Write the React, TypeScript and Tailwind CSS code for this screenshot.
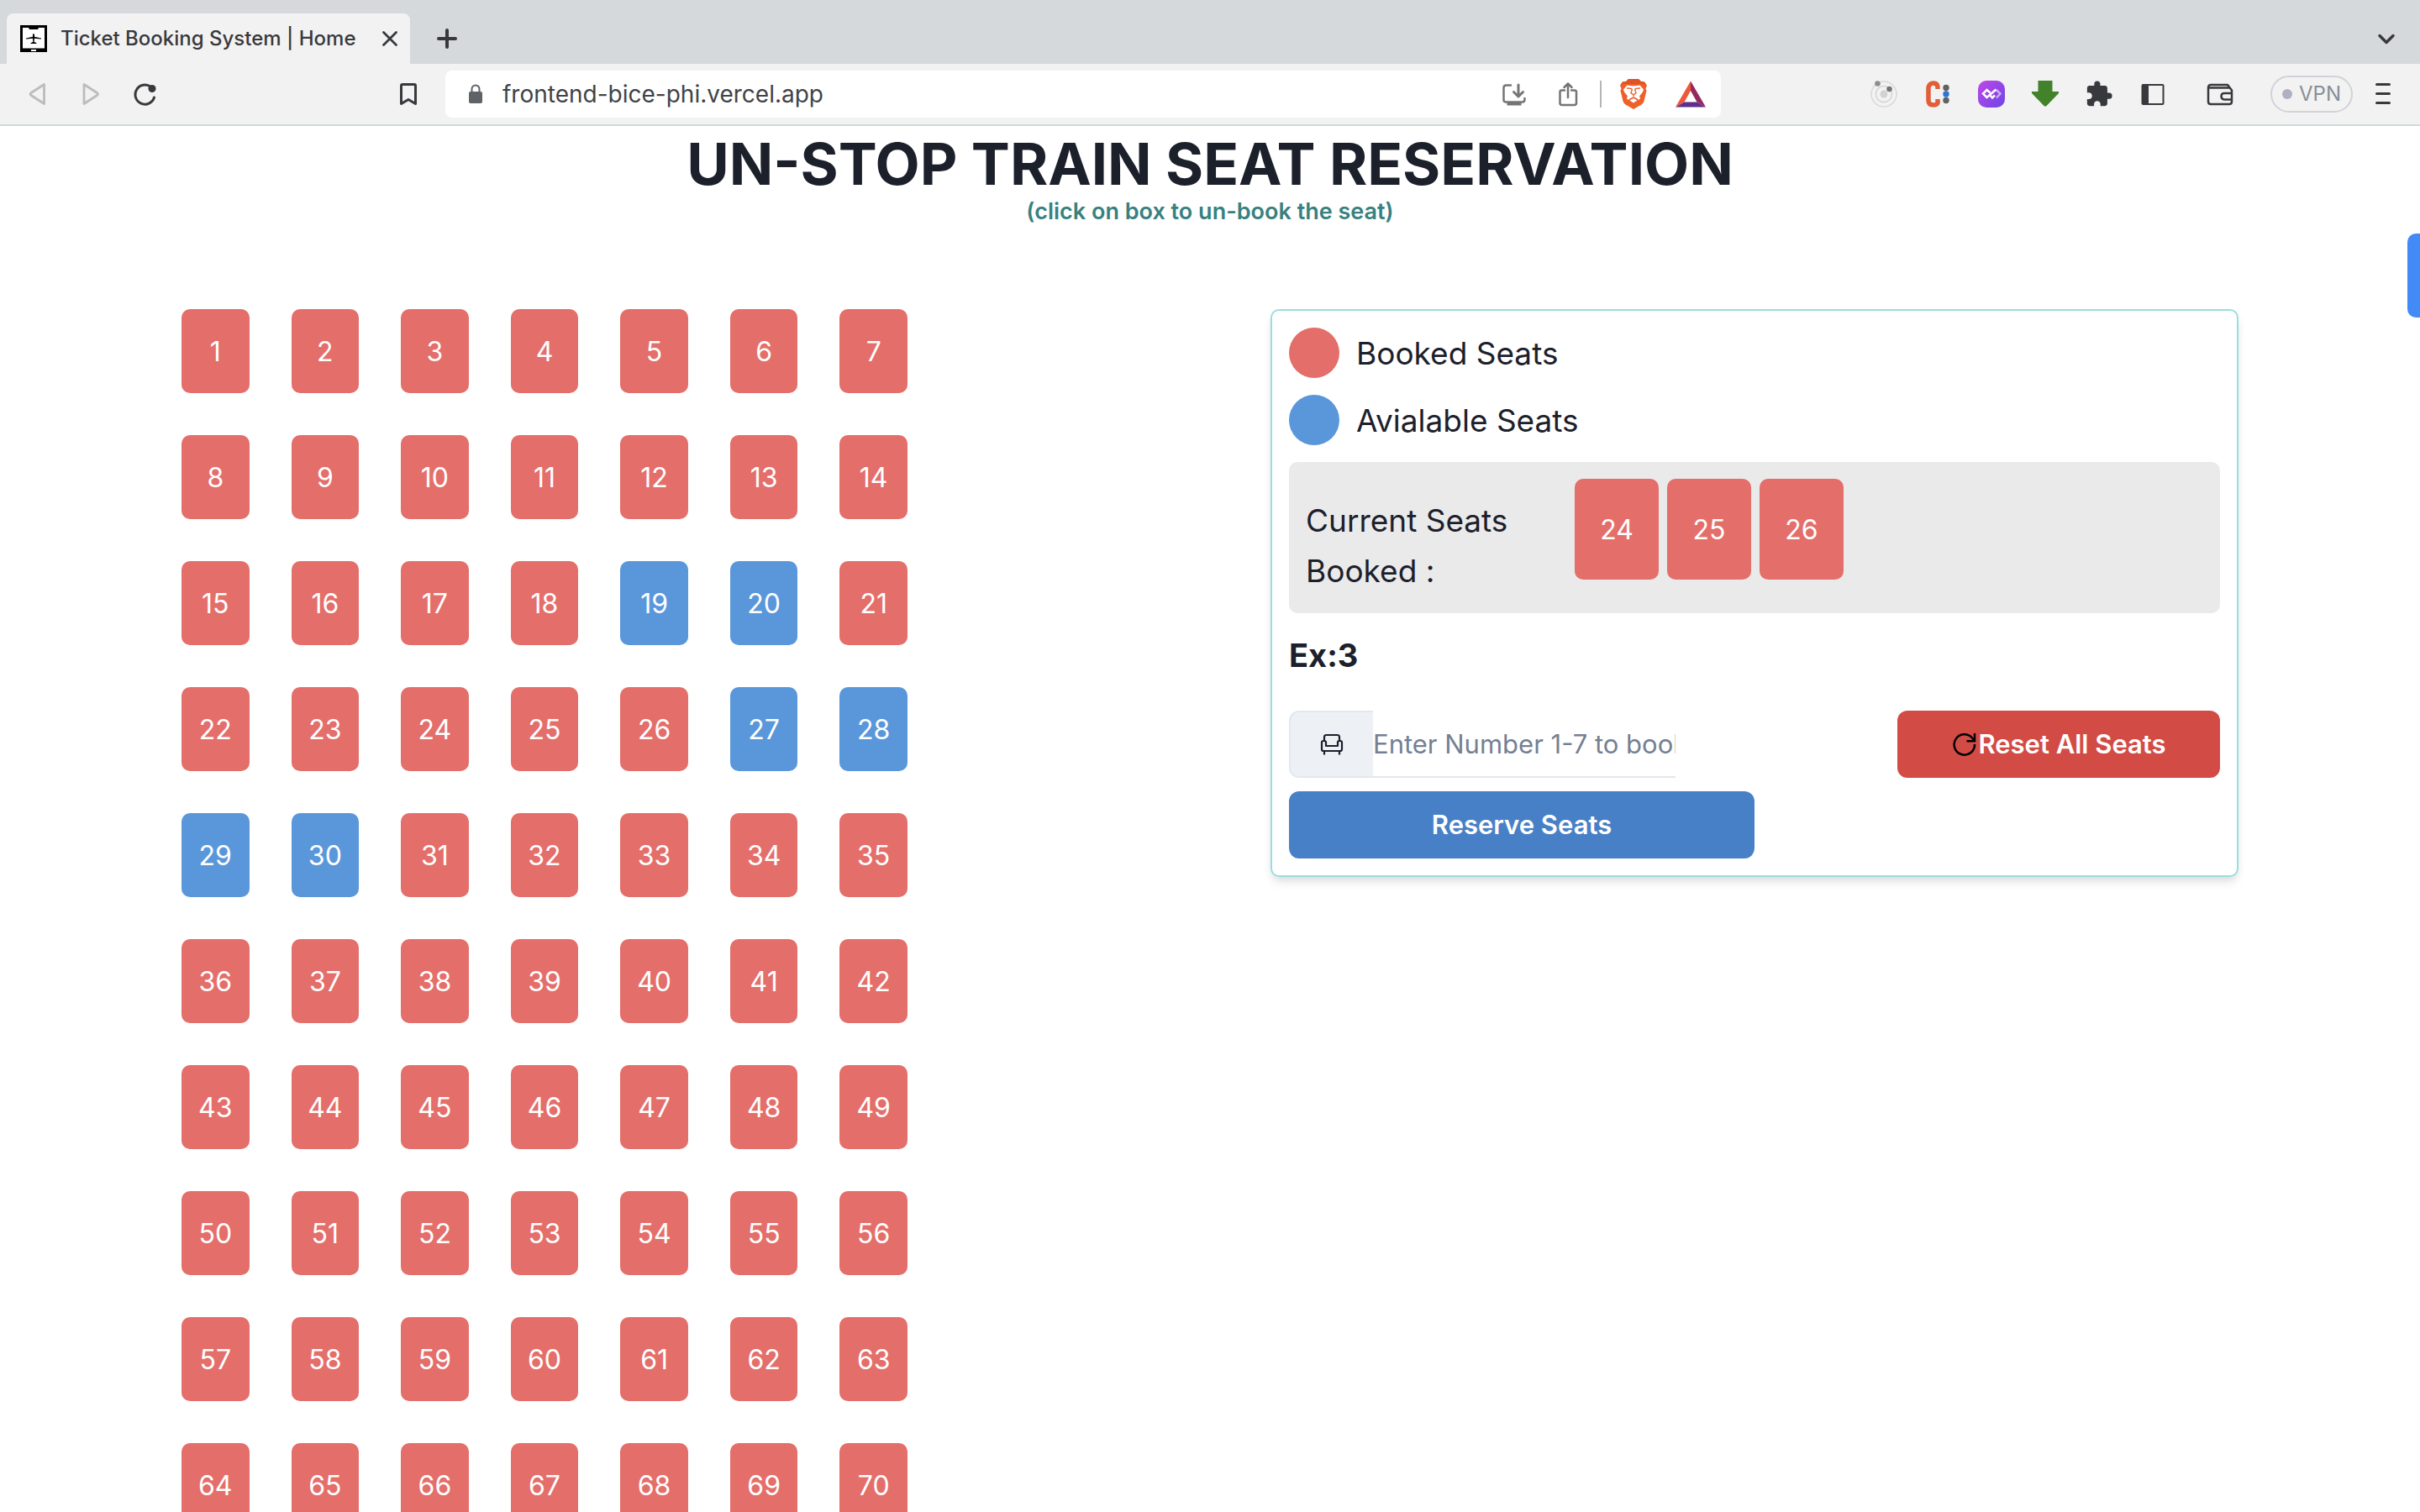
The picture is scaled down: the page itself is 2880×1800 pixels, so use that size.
import React from "react";
import { MdExtension } from "react-icons/md";

const AVAILABLE = new Set([19, 20, 27, 28, 29, 30]);
const SEATS = Array.from({ length: 70 }, (_, i) => i + 1);
const CURRENT = [24, 25, 26];

function ToolButton({ label, children }: { label: string; children: React.ReactNode }) {
  return (
    <button type="button" aria-label={label} className="flex size-8 shrink-0 items-center justify-center">
      <svg viewBox="0 0 32 32" className="size-8" fill="none" strokeLinecap="round" strokeLinejoin="round">
        {children}
      </svg>
    </button>
  );
}

function SeatIcon() {
  return (
    <svg viewBox="0 0 32 32" className="size-8" fill="none" stroke="#1c202b" strokeWidth="2.200" strokeLinejoin="round">
      <path d="M7 12V7.500Q7 5 9.500 5h13Q25 5 25 7.500V12" />
      <path d="M9 18v-4.500Q9 12 7 12H6Q4 12 4 14v8q0 2 2 2h20q2 0 2-2v-8q0-2-2-2h-1q-2 0-2 1.500V18z" />
      <path d="M7 24v4.500M25 24v4.500" />
    </svg>
  );
}

function ResetIcon() {
  return (
    <svg viewBox="0 0 32 32" className="size-8 shrink-0" fill="none" stroke="#000" strokeWidth="2.500">
      <path d="M28 16A12.200 12.200 0 1 1 25 8.500L28 12" />
      <path d="M28 3v9.200h-9.500" />
    </svg>
  );
}

function TabStrip() {
  return (
    <div className="flex h-[76px] items-end justify-between bg-[#d5d9dc] pl-2 text-[#38393d]">
      <div className="flex items-end">
        <div className="flex h-[60px] w-[480px] items-center rounded-t-lg bg-[#f2f2f2] pr-2 pl-4">
          <svg viewBox="0 0 32 32" className="size-8 shrink-0" fill="none">
            <rect width="32" height="32" fill="#000" />
            <path d="M3 3h7l1 2h10l1-2h7v24.500H3z" fill="#fff" />
            <rect x="13" y="29" width="6" height="2" fill="#fff" />
            <path
              d="M16 10c.8 0 1 1 1 2v1.800l8 1.600v1l-8-.6-.4 4 2.900 1.400v.8H12.500v-.8l2.900-1.400-.4-4-8 .6v-1l8-1.600V12c0-1 .2-2 1-2z"
              fill="#000"
            />
          </svg>
          <span className="ml-4 flex-1 text-2xl font-medium whitespace-nowrap">Ticket Booking System | Home</span>
          <ToolButton label="Close tab">
            <path d="M8.500 8.500l15 15M23.500 8.500l-15 15" stroke="#38393d" strokeWidth="2.800" />
          </ToolButton>
        </div>
        <div className="flex h-[60px] items-center pl-7">
          <ToolButton label="New tab">
            <path d="M16 6v20M6 16h20" stroke="#38393d" strokeWidth="4" />
          </ToolButton>
        </div>
      </div>
      <div className="flex h-[60px] items-center pr-6">
        <ToolButton label="Search tabs">
          <path d="M8 12.500l8 8 8-8" stroke="#38393d" strokeWidth="3.500" />
        </ToolButton>
      </div>
    </div>
  );
}

function Toolbar() {
  return (
    <div className="flex h-[74px] items-center border-b-2 border-[#d5d9dc] bg-[#f2f2f2]">
      <div className="flex w-[530px] shrink-0 items-center gap-8 px-7">
        <ToolButton label="Back">
          <path d="M24.500 4.500v23L9 17.500q-2-1.500 0-3z" stroke="#bcbcbc" strokeWidth="2.800" />
        </ToolButton>
        <ToolButton label="Forward">
          <path d="M8 4.500v23L23.500 17.500q2-1.500 0-3z" stroke="#bcbcbc" strokeWidth="2.800" />
        </ToolButton>
        <ToolButton label="Reload">
          <path d="M23.500 7.500A11.500 11.500 0 1 0 27.500 20" stroke="#38393d" strokeWidth="3" />
          <circle cx="25" cy="9.500" r="4.500" fill="#38393d" />
        </ToolButton>
        <div className="ml-auto flex">
          <ToolButton label="Bookmark">
            <path d="M7.500 6q0-1.500 1.500-1.500h14q1.500 0 1.500 1.500v21.500L16 22.500 7.500 27.500z" stroke="#38393d" strokeWidth="3" />
          </ToolButton>
        </div>
      </div>

      <div className="flex h-14 min-w-0 flex-1 items-center rounded-lg bg-white pr-[18px] pl-5">
        <svg viewBox="0 0 32 32" className="size-8 shrink-0" fill="none">
          <rect x="8" y="13" width="16" height="14" rx="2" fill="#5f6368" />
          <path d="M11.500 14v-4a4.500 4.500 0 0 1 9 0v4" stroke="#5f6368" strokeWidth="2" />
        </svg>
        <input
          aria-label="Address"
          readOnly
          value="frontend-bice-phi.vercel.app"
          className="ml-4 h-10 min-w-0 flex-1 bg-transparent text-[28px] text-[#414346] outline-none"
        />
        <div className="flex items-center">
          <ToolButton label="Install app">
            <path
              d="M12 5.500H6.500Q3.500 5.500 3.500 8.500v14.500Q3.500 25.500 6.500 25.500h19Q28.500 25.500 28.500 22.500V21"
              stroke="#757575"
              strokeWidth="2.500"
            />
            <path d="M7.500 26h17v3.500H7.500z" fill="#757575" />
            <path d="M21 5v13M15.500 13.500l5.500 5.500 5.500-5.500" stroke="#757575" strokeWidth="3" />
          </ToolButton>
          <div className="ml-8 flex">
            <ToolButton label="Share">
              <path
                d="M12 11.500H8.500Q6.500 11.500 6.500 13.500v13Q6.500 29 8.500 29h15q2.500 0 2.500-2.500v-13q0-2-2.500-2H20M16 20V4M11.500 8L16 3.500 20.500 8"
                stroke="#757575"
                strokeWidth="2.500"
              />
            </ToolButton>
          </div>
          <span className="ml-[22px] h-8 w-[2px] bg-[#b5b5b5]" />
          <button type="button" aria-label="Brave Shields" className="ml-[22px] flex h-9 w-8">
            <svg viewBox="0 0 32 36" className="h-9 w-8" fill="none" strokeLinecap="round" strokeLinejoin="round">
              <path
                d="M10 0h12l3 3 4 .5 3 4-1.500 4 1 2.500-3 12.500q-.8 2.500-3 4L16 36l-9.500-5.500q-2.200-1.500-3-4L.5 14l1-2.500L0 7.500l3-4L7 3z"
                fill="#ef6029"
              />
              <path d="M10 0h12l3 3 4 .5 2 3-4-.5H5l-4 .5 2-3L7 3z" fill="#dd5525" />
              <path
                d="M8.500 7.500l5 .8h5l5-.8 4.500 5-1 3-4 5 1 2.500-1.500 2-3.500-2.500-3-1-3 1L9.500 25 8 23l1-2.500-4-5-1-3z"
                fill="#fff"
              />
              <path d="M16 23l4.500 2.500L16 28.500 11.500 25.500z" fill="#fff" />
              <path d="M8.500 11l4.500.4 1.300 1-1.300 4.600 3 1.700 3-1.700-1.300-4.600 1.300-1 4.500-.4M16 18.700v2.300" stroke="#ef6029" strokeWidth="1.400" />
            </svg>
          </button>
          <button type="button" aria-label="Brave Rewards" className="ml-[34px] flex h-8 w-9">
            <svg viewBox="0 0 36 32" className="h-8 w-9">
              <path d="M18 .5V12L10.500 25.500 0 31.500z" fill="#f0573a" />
              <path d="M18 .5L36 31.500 25.500 25.500 18 12z" fill="#93295f" />
              <path d="M0 31.500l10.500-6h15l10.500 6z" fill="#5f2d8c" />
            </svg>
          </button>
        </div>
      </div>

      <div className="flex w-[832px] shrink-0 items-center justify-end pr-7">
        <div className="flex items-center gap-8">
          <ToolButton label="Orbit extension">
            <circle cx="16" cy="16" r="15" stroke="#d6d6d6" strokeWidth="1.500" strokeDasharray="2 1.500" />
            <circle cx="16" cy="16" r="9.500" stroke="#d3d3d3" strokeWidth="1.500" strokeDasharray="2 1" />
            <circle cx="16" cy="16" r="4.500" fill="#d2d2d2" />
            <circle cx="8.500" cy="3.500" r="3.300" fill="#8e8e8e" />
            <circle cx="22.500" cy="10" r="3.300" fill="#757575" />
          </ToolButton>
          <ToolButton label="Contest extension">
            <path
              d="M16 10V8.500Q16 3 11 3T5 8.500v15Q5 29 11 29T16 23.500V22"
              stroke="#e15f38"
              strokeWidth="5.500"
              strokeLinecap="butt"
            />
            <circle cx="26" cy="8.500" r="3.700" fill="#616161" />
            <circle cx="26" cy="16" r="3.700" fill="#2f73d0" />
            <circle cx="26" cy="23.500" r="3.700" fill="#616161" />
          </ToolButton>
          <ToolButton label="Link extension">
            <defs>
              <linearGradient id="violet" x1="0" y1="0" x2="1" y2="1">
                <stop offset="0" stopColor="#c147e9" />
                <stop offset="1" stopColor="#6a45e6" />
              </linearGradient>
            </defs>
            <rect width="32" height="32" rx="10" fill="url(#violet)" />
            <path d="M22 11l4.500 4.500-4.500 5" stroke="#c9aef5" strokeWidth="2.500" strokeLinecap="butt" strokeLinejoin="miter" />
            <path
              d="M14.500 14.500L10.500 11 6 15.500l4.500 4.500 11-9.500M14 17l3 3.500 3-3"
              stroke="#fff"
              strokeWidth="2.500"
              strokeLinecap="butt"
              strokeLinejoin="miter"
            />
          </ToolButton>
          <ToolButton label="Download extension">
            <path d="M7.500 0h17v13H32v2L17 30.500h-2L0 15v-2h7.500z" fill="#41822a" />
          </ToolButton>
          <button type="button" aria-label="Extensions" className="flex size-8 items-center justify-center">
            <MdExtension size={34} color="#38393d" className="shrink-0" />
          </button>
          <ToolButton label="Sidebar">
            <rect x="3.500" y="5" width="25" height="23" rx="1" stroke="#38393d" strokeWidth="2" />
            <path d="M3 5h8v23H3z" fill="#38393d" />
          </ToolButton>
        </div>
        <div className="ml-12 flex">
          <ToolButton label="Wallet">
            <path
              d="M2 8.500V25Q2 28 5 28H27Q30 28 30 25V11.500L25 5H5Q2 5 2 8.500H26M30 15H21Q17.500 15 17.500 18.500T21 22.500H30"
              stroke="#38393d"
              strokeWidth="2.500"
            />
          </ToolButton>
        </div>
        <button
          type="button"
          className="ml-11 flex h-11 w-[98px] shrink-0 items-center gap-2 rounded-full border-2 border-[#d2d2d8] pl-3 text-2xl text-[#878e97]"
        >
          <span className="size-3 shrink-0 rounded-full bg-[#b0b0c2]" />
          VPN
        </button>
        <div className="ml-5 flex">
          <ToolButton label="Menu">
            <path d="M8.500 4.500h15M8.500 15.500h15M8.500 26.500h15" stroke="#38393d" strokeWidth="3" />
          </ToolButton>
        </div>
      </div>
    </div>
  );
}

function SeatGrid() {
  return (
    <div className="grid w-[35.294%] grid-cols-7 gap-[50px]">
      {SEATS.map((n) => (
        <button
          key={n}
          type="button"
          className={
            AVAILABLE.has(n)
              ? "h-[100px] rounded-[10px] bg-[#5a97da] pt-0.5 text-[32px] text-white"
              : "h-[100px] rounded-[10px] bg-[#e46e6a] pt-0.5 text-[32px] text-white"
          }
        >
          {n}
        </button>
      ))}
    </div>
  );
}

function BookingCard() {
  return (
    <section className="flex w-[47.059%] flex-col rounded-[10px] border-2 border-[#9adddd] p-5 text-[37px] leading-[60px] shadow-[0_8px_12px_-2px_rgba(0,0,0,0.1),0_4px_8px_-2px_rgba(0,0,0,0.06)]">
      <div className="flex h-[60px] items-center gap-5">
        <span className="size-[60px] rounded-full bg-[#e46e6a]" />
        <p className="pt-0.5">Booked Seats</p>
      </div>
      <div className="mt-5 flex h-[60px] items-center gap-5">
        <span className="size-[60px] rounded-full bg-[#5a97da]" />
        <p className="pt-0.5">Avialable Seats</p>
      </div>
      <div className="mt-5 flex h-[180px] rounded-[10px] bg-[#eaeaea] p-5">
        <p className="mr-5 w-[300px] pt-5">Current Seats Booked :</p>
        <div className="flex gap-[10px]">
          {CURRENT.map((n) => (
            <span
              key={n}
              className="flex h-[120px] w-[100px] items-center justify-center rounded-[10px] bg-[#e46e6a] pt-0.5 text-[32px] text-white"
            >
              {n}
            </span>
          ))}
        </div>
      </div>
      <h2 className="pt-5 text-[38px] font-bold">Ex:3</h2>
      <form className="mt-9" onSubmit={(e) => e.preventDefault()}>
        <div className="flex justify-between">
          <div className="flex h-20 w-[460px]">
            <label
              htmlFor="seat-count"
              aria-label="Number of seats"
              className="flex w-[100px] shrink-0 items-center justify-center rounded-l-xl border-2 border-r-0 border-[#e2e8ec] bg-[#edf1f6]"
            >
              <SeatIcon />
            </label>
            <input
              id="seat-count"
              type="text"
              placeholder="Enter Number 1-7 to book"
              className="min-w-0 flex-1 border-b-2 border-[#e2e8ec] pt-0.5 text-[31px] outline-none placeholder:text-[#748094]"
            />
          </div>
          <button
            type="button"
            className="flex h-20 w-[384px] items-center justify-center rounded-xl bg-[#d24c45] text-[31px] font-semibold text-white"
          >
            <ResetIcon />
            Reset All Seats
          </button>
        </div>
        <button
          type="submit"
          className="mt-4 flex h-20 w-1/2 items-center justify-center rounded-xl bg-[#4780c6] text-[31px] font-semibold text-white"
        >
          Reserve Seats
        </button>
      </form>
    </section>
  );
}

export default function App() {
  return (
    <div className="flex h-screen flex-col overflow-hidden bg-white font-['Inter',sans-serif] text-[#1c202b]">
      <header className="shrink-0">
        <TabStrip />
        <Toolbar />
      </header>
      <main className="relative min-h-0 flex-1 overflow-hidden">
        <h1 className="pt-[2px] text-center text-[69px] leading-[86px] font-bold">UN-STOP TRAIN SEAT RESERVATION</h1>
        <p className="text-center text-[27px] leading-7 font-semibold text-[#38817f]">(click on box to un-book the seat)</p>
        <div className="mt-[102px] flex items-start justify-between px-[7.5%]">
          <SeatGrid />
          <BookingCard />
        </div>
        <button
          type="button"
          aria-label="Open side panel"
          className="absolute top-32 right-0 h-[100px] w-[15px] rounded-l-[10px] bg-[#428af5]"
        />
      </main>
    </div>
  );
}
